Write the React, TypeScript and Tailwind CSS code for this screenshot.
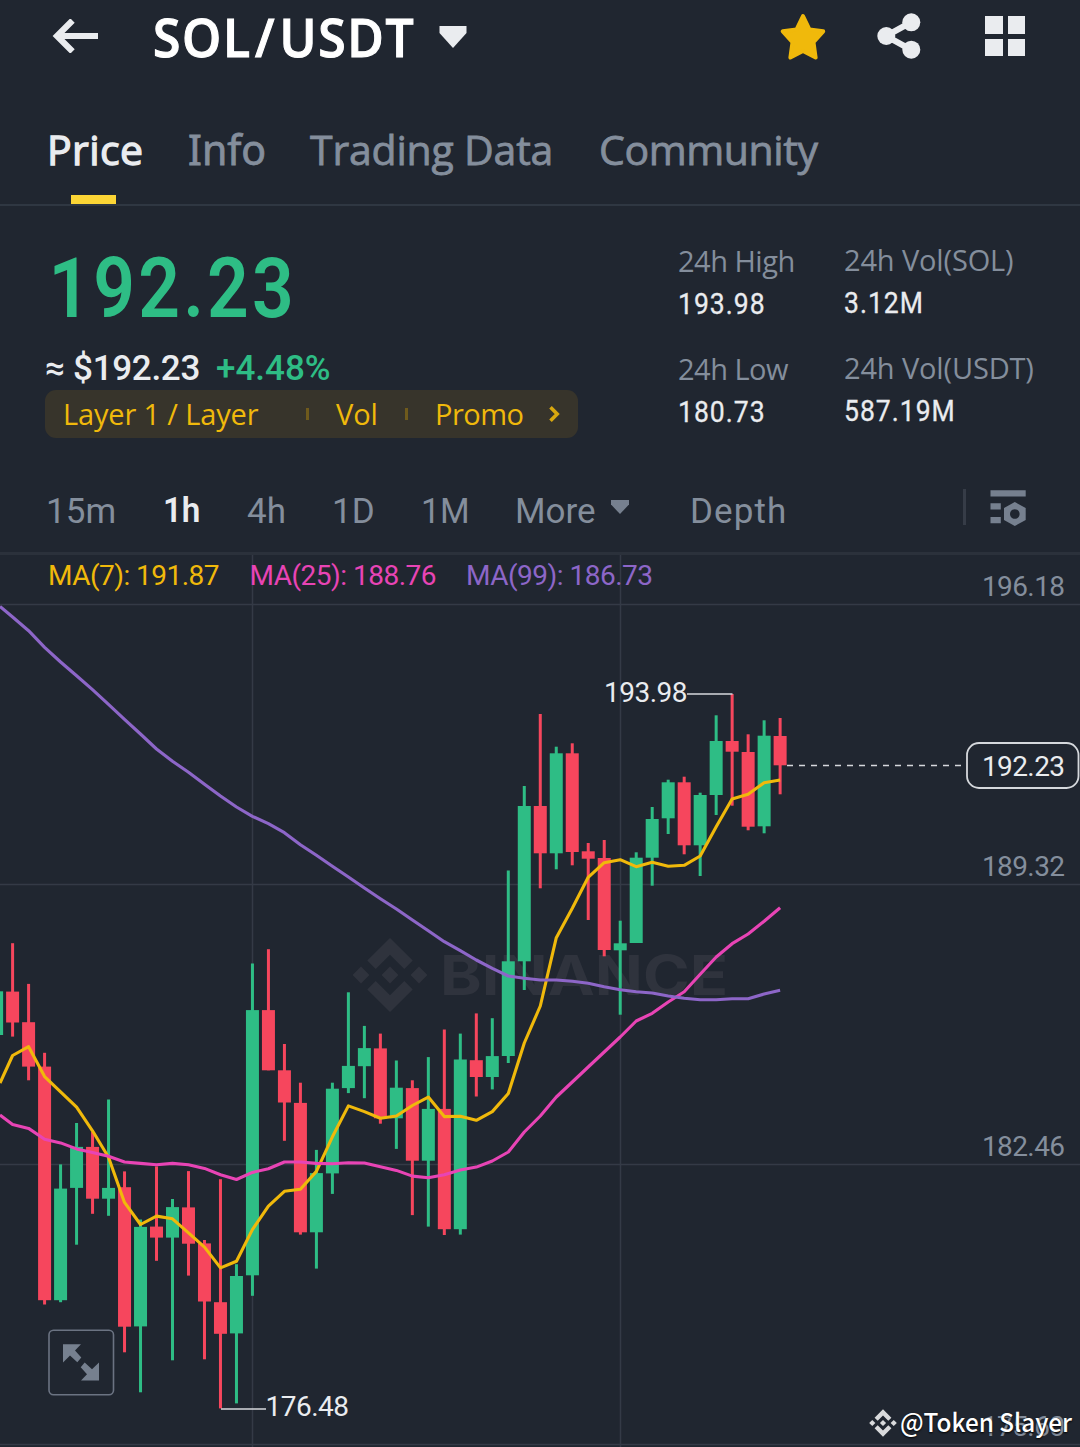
import React from "react";

type Candle = [high: number, top: number, bottom: number, low: number, up: 0 | 1];

const candles: Candle[] = [
  [991.3, 991.3, 1035, 1035, 1],
  [943.2, 991.6, 1022.5, 1036.6, 0],
  [983.9, 1022.2, 1066.6, 1080.3, 0],
  [1052.8, 1066.6, 1300.2, 1304.5, 0],
  [1164.4, 1188.6, 1300.2, 1302.2, 1],
  [1123, 1146.9, 1187.9, 1244.7, 1],
  [1131.8, 1146.9, 1198.7, 1213.8, 0],
  [1099.5, 1187.9, 1198.7, 1215.8, 1],
  [1171.4, 1187.2, 1326.7, 1352.3, 0],
  [1219.5, 1226.9, 1326.4, 1392.3, 1],
  [1166.4, 1226.6, 1237.6, 1260.8, 0],
  [1199, 1207.1, 1237.6, 1360.3, 1],
  [1171.1, 1207.4, 1243.7, 1275.6, 0],
  [1240, 1243.4, 1301.5, 1359.3, 0],
  [1179.2, 1302.2, 1333.8, 1408.4, 0],
  [1264.2, 1276, 1333.4, 1403.4, 1],
  [963.5, 1010.1, 1275.3, 1295.8, 1],
  [949.2, 1010.1, 1070.3, 1070.3, 0],
  [1044, 1070.3, 1102.5, 1140.8, 0],
  [1082.7, 1102.9, 1232.3, 1234.6, 0],
  [1149.9, 1173.1, 1232.3, 1268.6, 1],
  [1082.7, 1088.7, 1173.4, 1193.9, 1],
  [992.3, 1065.9, 1088.1, 1093.1, 1],
  [1025.9, 1048.1, 1066.2, 1098.2, 1],
  [1033.6, 1048.4, 1118.3, 1123.7, 0],
  [1060.5, 1087.7, 1118.3, 1148.9, 1],
  [1080.3, 1088.1, 1160.7, 1215.1, 0],
  [1057.1, 1108.9, 1160.7, 1226.6, 1],
  [1029.5, 1108.9, 1229.2, 1235, 0],
  [1033.6, 1059.5, 1229.2, 1234.6, 1],
  [1013.4, 1060.2, 1077, 1096.5, 0],
  [1018.2, 1056.1, 1077, 1089.4, 1],
  [870.5, 961.3, 1056, 1063, 1],
  [786, 806, 961.3, 990, 1],
  [714, 806, 853.3, 888.3, 0],
  [746.7, 753.3, 853.3, 869.3, 1],
  [743.3, 753.3, 852, 865.3, 0],
  [843, 851.3, 858.7, 920, 0],
  [840, 858, 950, 956.3, 0],
  [920.7, 943.3, 950.3, 1014.7, 1],
  [852.3, 857.7, 943, 943, 1],
  [807, 819, 857.7, 885.7, 1],
  [779.7, 782.3, 818.3, 834, 1],
  [776.7, 782.3, 845.3, 854.3, 0],
  [792.7, 795, 845.3, 876, 1],
  [715.3, 741, 795, 815, 1],
  [694, 741, 751.7, 805.7, 0],
  [734.3, 752, 826.7, 830.3, 0],
  [720.3, 735.7, 826.3, 833.3, 1],
  [718, 736, 765.3, 794.3, 0],
];

const ma7 = [
  1055.5, 1046.7, 1076.6, 1091.8, 1107.2, 1130.8, 1157.3, 1202.4, 1224.5, 1216.1, 1218.8, 1232.9,
  1247.1, 1267.9, 1261.2, 1229.6, 1206.1, 1191.3, 1189.2, 1171.4, 1136.8, 1105.9, 1111.6, 1118.3,
  1116, 1105.5, 1097.1, 1116.6, 1116.3, 1120.3, 1111.6, 1093.5, 1043, 1006, 937.7, 908.3, 877.3,
  862.7, 859.7, 866.7, 862.3, 866.3, 865.3, 856, 826.7, 799, 794.3, 782.7, 780,
];

const ma25 = [
  1124.4, 1128.4, 1139.2, 1142.9, 1148.9, 1152.6, 1156.3, 1162, 1163.4, 1164.7, 1163.4, 1164.7,
  1168.4, 1174.8, 1179.5, 1172.4, 1168.7, 1162, 1162, 1163.4, 1163.7, 1162.7, 1163, 1166.7, 1170.4,
  1176.1, 1177.8, 1174.8, 1170.1, 1167.1, 1161, 1152, 1132, 1116, 1097, 1082, 1067, 1052, 1037,
  1021, 1013.3, 1002, 991.7, 974.3, 957, 943.7, 934, 921.3, 907.7,
];

const ma99 = [
  617, 630.7, 647.3, 662, 675.7, 689.7, 704.3, 719.3, 734, 749, 761.3, 772.3, 784.3, 796, 807,
  816.3, 823.7, 832.7, 844.7, 855.3, 866.3, 877, 888, 898.7, 909, 920, 930.7, 941.7, 950.7, 960,
  968.3, 976, 978.3, 980, 980, 981.3, 983.3, 986.7, 989.7, 991.7, 993, 996, 998.3, 999.7, 999.7,
  998.7, 998.7, 994, 990.3,
];

const xAt = (i: number) => 12.6 + i * 15.99;

const linePoints = (startY: number, values: number[]) =>
  `0,${startY} ` + values.map((v, i) => `${xAt(i).toFixed(1)},${v}`).join(" ");

function BinanceMark({ cx, cy, scale, fill }: { cx: number; cy: number; scale: number; fill: string }) {
  return (
    <g transform={`translate(${cx} ${cy}) scale(${scale})`} fill={fill}>
      <path d="M0-37 22.7-14.5 14.3-6 0-20.2-14.3-6-22.7-14.5Z" />
      <path d="M0 37 22.7 14.5 14.3 6 0 20.2-14.3 6-22.7 14.5Z" />
      <path d="M0-8.4 8.4 0 0 8.4-8.4 0Z" />
      <path d="M-29-8.4-20.6 0-29 8.4-37.4 0Z" />
      <path d="M29-8.4 37.4 0 29 8.4 20.6 0Z" />
    </g>
  );
}

function Header() {
  return (
    <header className="flex h-[72px] items-center pr-[55px] pl-[52px]">
      <svg className="h-[34px] w-[46px]" viewBox="0 0 46 34" fill="none" stroke="#eaecef" strokeWidth="6.2">
        <path d="M46 17H5M20.5 1.5 5 17 20.5 32.5" />
      </svg>
      <h1 className="ml-[55px] flex w-[286px] origin-left scale-x-[0.94] font-['Open_Sans'] text-[53px] leading-none font-semibold tracking-[1.8px] whitespace-nowrap text-white [-webkit-text-stroke:1.1px_#fff]">
        <span>SOL</span>
        <span className="mx-[3.5px]">/</span>
        <span>USDT</span>
      </h1>
      <svg className="mt-[2px] h-[22px] w-[28px]" viewBox="0 0 28 22" fill="#eaecef">
        <path d="M0.5 0H27.5V7L14 22 0.5 7Z" />
      </svg>
      <div className="ml-auto flex items-center">
        <svg className="mr-[51px] h-[48px] w-[46px]" viewBox="780 12 46 48" fill="#f0b90b" stroke="#f0b90b" strokeWidth="4" strokeLinejoin="round">
          <path d="M803 16 809.5 29.6 823.2 31.3 813.5 42.2 815.6 57.5 803 51 790.4 57.5 792.5 42.2 782.8 31.3 796.5 29.6Z" />
        </svg>
        <svg className="mr-[64px] h-[48px] w-[44px]" viewBox="877 12 44 48" fill="#eaecef">
          <path d="M911.5 22 886 36 911.5 50" fill="none" stroke="#eaecef" strokeWidth="6" />
          <circle cx="886.3" cy="36" r="9" />
          <circle cx="911.3" cy="22.3" r="9" />
          <circle cx="911.3" cy="49.7" r="9" />
        </svg>
        <div className="grid grid-cols-2 gap-[5px]">
          <i className="size-[17.5px] bg-[#eaecef]" />
          <i className="size-[17.5px] bg-[#eaecef]" />
          <i className="size-[17.5px] bg-[#eaecef]" />
          <i className="size-[17.5px] bg-[#eaecef]" />
        </div>
      </div>
    </header>
  );
}

function Tabs() {
  return (
    <nav className="flex h-[134px] border-b-2 border-[#2f3742] pt-[57px] pl-[47px] text-[41px] leading-[40px] whitespace-nowrap text-[#848e9c]">
      <div className="flex w-[140px] flex-col text-[#eaecef]">
        <span className="font-['Open_Sans'] tracking-[0.4px] [-webkit-text-stroke:1.3px]">Price</span>
        <i className="mt-[26px] ml-[24px] h-[9px] w-[45px] bg-[#fcd535]" />
      </div>
      <span className="w-[123px] pl-px font-['Noto_Sans'] tracking-[0px] [-webkit-text-stroke:0.8px]">Info</span>
      <span className="w-[288px] font-['Open_Sans'] tracking-[-0.2px] [-webkit-text-stroke:0.8px]">Trading Data</span>
      <span className="pl-px font-['Open_Sans'] tracking-[-0.4px] [-webkit-text-stroke:0.8px]">Community</span>
    </nav>
  );
}

function Stat({ label, value }: { label: string; value: string }) {
  return (
    <div className="whitespace-nowrap">
      <div className="h-[42px] font-['Open_Sans'] text-[29px] leading-[42px] text-[#848e9c]">{label}</div>
      <div className="h-[44px] origin-left scale-x-[0.9] font-['Roboto'] text-[29.5px] leading-[44px] tracking-[1.1px] text-[#eaecef] [-webkit-text-stroke:0.3px]">
        {value}
      </div>
    </div>
  );
}

function Summary() {
  return (
    <section className="flex h-[232px] justify-between pl-[45px]">
      <div className="flex flex-col pt-[40px]">
        <div className="h-[84px] origin-left scale-x-[0.87] pl-[4px] font-['Roboto'] text-[84px] leading-[85px] font-semibold tracking-[3.6px] text-[#2ebd85]">
          192.23
        </div>
        <div className="mt-[19px] flex h-[40px] font-['Roboto'] text-[35px] leading-[40px] font-medium whitespace-nowrap">
          <span className="w-[171px] tracking-[-0.3px] text-[#eaecef]">≈ $192.23</span>
          <span className="text-[#2ebd85]">+4.48%</span>
        </div>
        <div className="mt-px flex h-[48px] w-[533px] items-center rounded-[11px] bg-[#37342b] pl-[18px] font-['Open_Sans'] text-[29px] leading-[28px] tracking-[-0.15px] whitespace-nowrap text-[#f0b90b]">
          <span className="w-[243px]">Layer 1 / Layer</span>
          <i className="h-[12px] w-[3px] bg-[#6f5a1c]" />
          <span className="ml-[27px] w-[69px]">Vol</span>
          <i className="h-[12px] w-[3px] bg-[#6f5a1c]" />
          <span className="ml-[27px] w-[114px] tracking-[-0.5px]">Promo</span>
          <svg className="h-[16px] w-[11px]" viewBox="0 0 11 16" fill="none" stroke="#d9a80f" strokeWidth="3.6">
            <path d="M1.5 1.3 8.2 8 1.5 14.7" />
          </svg>
        </div>
      </div>
      <div className="flex pt-[34px]">
        <div className="flex w-[166px] flex-col gap-[22px] pl-px tracking-[-0.5px]">
          <Stat label="24h High" value="193.98" />
          <Stat label="24h Low" value="180.73" />
        </div>
        <div className="-mt-px flex w-[237px] flex-col gap-[22px] pl-px tracking-[-0.15px]">
          <Stat label="24h Vol(SOL)" value="3.12M" />
          <Stat label="24h Vol(USDT)" value="587.19M" />
        </div>
      </div>
    </section>
  );
}

function Intervals() {
  return (
    <div className="mt-[32px] flex h-[85px] items-center border-b-3 border-[#2b313b] pl-[46px] font-['Roboto'] text-[35px] leading-none whitespace-nowrap text-[#848e9c]">
      <span className="w-[117px] tracking-[0.1px]">15m</span>
      <span className="-mt-[2px] w-[84px] origin-left scale-x-[0.95] font-semibold tracking-[-0.2px] text-[#eaecef]">1h</span>
      <span className="w-[85px]">4h</span>
      <span className="w-[89px]">1D</span>
      <span className="w-[93px] origin-left scale-x-[0.97]">1M</span>
      <span className="w-[97px] pl-px">More</span>
      <svg className="-mt-[8px] h-[14px] w-[18px]" viewBox="0 0 18 14" fill="#76808f">
        <path d="M0 0H18V4.5L9 14 0 4.5Z" />
      </svg>
      <span className="ml-[60px] pl-px tracking-[1.1px]">Depth</span>
      <i className="-mt-[8px] ml-auto h-[36px] w-[3px] bg-[#363c47]" />
      <svg className="-mt-[7px] mr-[53px] ml-[23px] h-[38px] w-[38px]" viewBox="989 489 38 38" fill="#76808f">
        <path d="M990.5 490.3h35.2v6.3h-35.2zM990.5 503.3h10.3v6.3h-10.3zM990.5 517h10.3v6.3h-10.3z" />
        <path fillRule="evenodd" d="M1014.8 502 1025.7 508V520L1014.8 526 1004 520V508ZM1014.8 509.2a4.8 4.8 0 1 0 .01 0Z" />
      </svg>
    </div>
  );
}

function Chart() {
  return (
    <svg className="block h-[892px] w-[1080px] font-['Roboto'] text-[28px]" viewBox="0 555 1080 892">
      <path d="M0 604.5H1080M0 884.5H1080M0 1164.5H1080M0 1444.5H1080M252.5 555V1447M620.5 555V1447" stroke="#343a46" strokeWidth="1.5" />

      <BinanceMark cx={390} cy={975} scale={1} fill="#2f333d" />
      <text x="440" y="995" textLength="288" lengthAdjust="spacingAndGlyphs" fill="#2f333d" className="font-['Inter'] text-[55px] font-bold">
        BINANCE
      </text>

      {candles.map(([high, top, bottom, low, up], i) => {
        const x = xAt(i - 1);
        return (
          <g key={i} fill={up ? "#2ebd85" : "#f6465d"}>
            <rect x={x - 1.5} y={high} width={3} height={low - high} />
            <rect x={x - 6.5} y={top} width={13} height={bottom - top} />
          </g>
        );
      })}

      <g fill="none" strokeWidth="3.1" strokeLinejoin="round">
        <polyline points={linePoints(1083, ma7)} stroke="#f0b90b" />
        <polyline points={linePoints(1115, ma25)} stroke="#e844b5" />
        <polyline points={linePoints(606.5, ma99)} stroke="#8d66c8" />
      </g>

      <text x="48" y="585" textLength="171.5" fill="#f0b90b">MA(7): 191.87</text>
      <text x="249.5" y="585" textLength="187" fill="#e844b5">MA(25): 188.76</text>
      <text x="466" y="585" textLength="187" fill="#8d66c8">MA(99): 186.73</text>

      <g fill="#848e9c">
        <text x="982" y="596" textLength="83">196.18</text>
        <text x="982" y="876" textLength="83">189.32</text>
        <text x="982" y="1156" textLength="83">182.46</text>
        <text x="982" y="1436" textLength="83">175.60</text>
      </g>

      <g stroke="#d5d8dc" strokeWidth="1.6">
        <path d="M687 694H732.5M221 1409H266" />
        <path d="M787 765.5H962" strokeDasharray="6 6" />
      </g>
      <g fill="#eaecef">
        <text x="604" y="702" textLength="83.5">193.98</text>
        <text x="265.5" y="1416" textLength="83.5">176.48</text>
      </g>

      <rect x="967" y="743" width="111.5" height="45" rx="12" fill="#202630" stroke="#d5d8dc" strokeWidth="1.8" />
      <text x="982" y="776" textLength="83" fill="#eaecef">192.23</text>

      <rect x="49" y="1330.3" width="64.5" height="64.5" rx="4.5" fill="#202630" stroke="#6b7382" strokeWidth="1.6" />
      <g fill="#76808f">
        <path d="M63 1344.3H81L75 1350.6 81.3 1357.5 77.3 1362.3 70 1355.6 63 1362.4Z" />
        <path d="M99 1380.5H81L87 1374.2 80.7 1367.3 84.7 1362.5 92 1369.2 99 1362.4Z" />
      </g>

      <BinanceMark cx={883} cy={1423} scale={0.37} fill="#d9dadc" />
      <text x="900" y="1432" textLength="172" lengthAdjust="spacingAndGlyphs" fill="#ffffff" className="font-['Noto_Sans_CJK_SC',sans-serif] text-[25px] font-medium [text-shadow:0_1px_2px_#000]">
        @Token Slayer
      </text>
    </svg>
  );
}

export default function App() {
  return (
    <main className="h-[1447px] w-[1080px] overflow-hidden bg-[#202630]">
      <Header />
      <Tabs />
      <Summary />
      <Intervals />
      <Chart />
    </main>
  );
}
